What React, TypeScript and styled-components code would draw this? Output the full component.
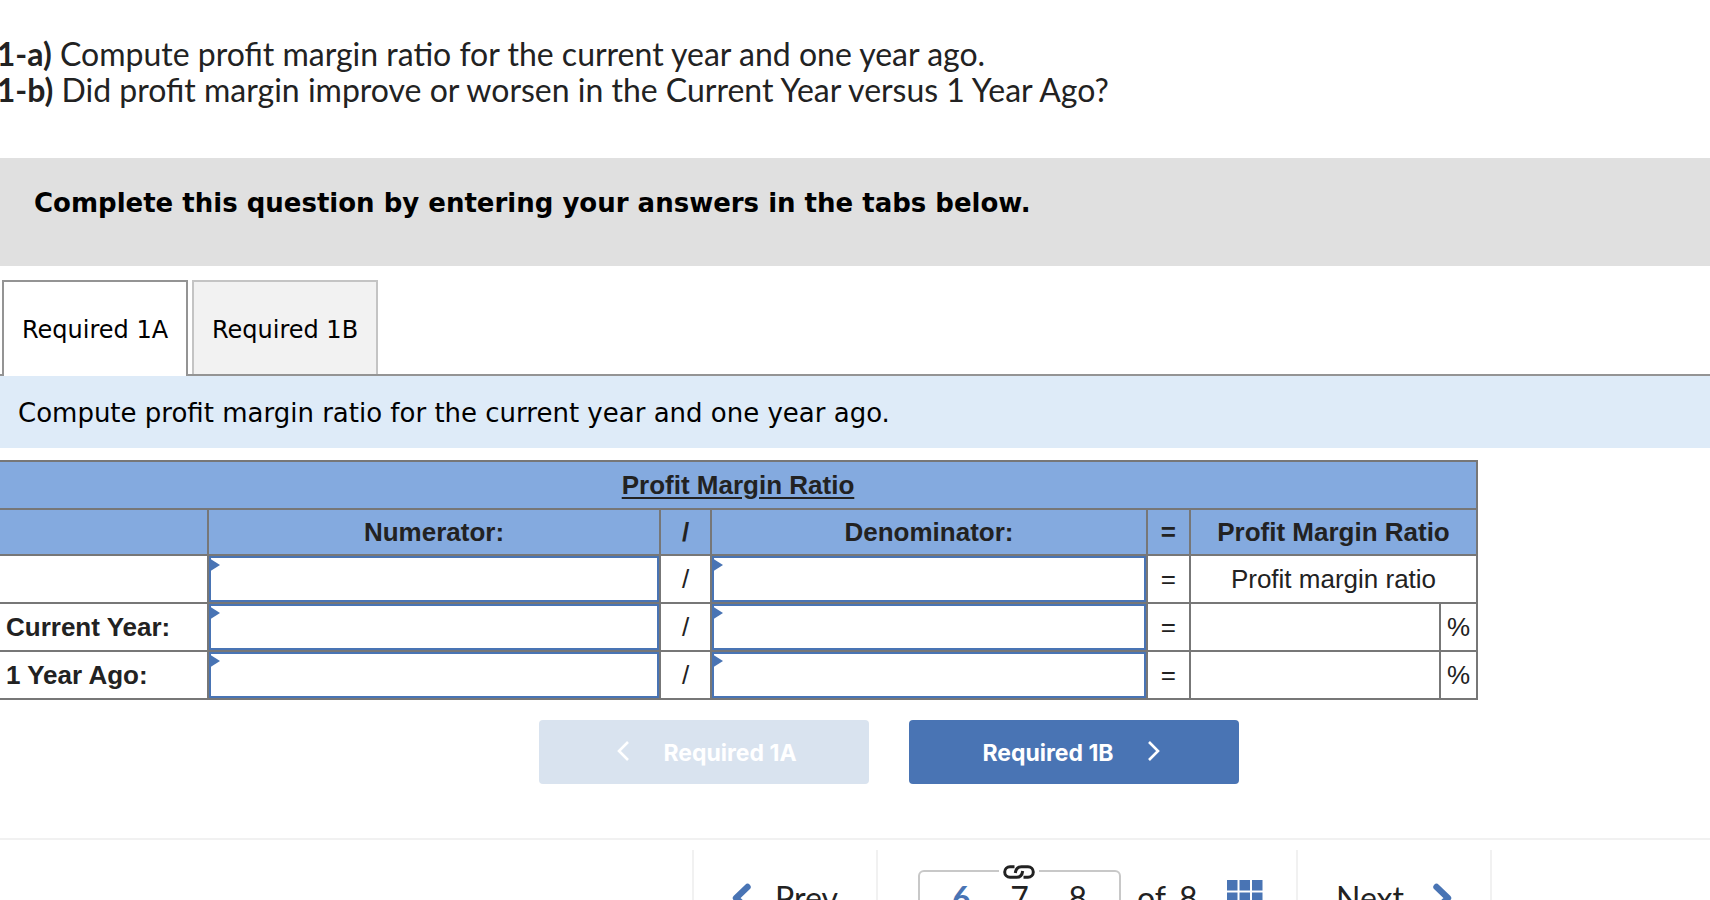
import React, { useState } from "react";
import styled, { createGlobalStyle } from "styled-components";

const GlobalStyle = createGlobalStyle`
  * { box-sizing: border-box; }
  body { margin: 0; background: #fff; }
`;

const uiFont = `Lato, "Liberation Sans", sans-serif`;
const wideFont = `"DejaVu Sans", "Liberation Sans", sans-serif`;
const sheetFont = `"Liberation Sans", sans-serif`;
const line = "#777777";
const blue = "#4974b4";

const Page = styled.main`
  display: flex;
  flex-direction: column;
  height: 100vh;
  overflow: hidden;
  color: #222;
`;

const Intro = styled.section`
  flex: none;
  padding: 36px 0 50px;
  margin-left: -12px;
  font: 32px/36px ${uiFont};
`;

const IntroLine = styled.p`
  margin: 0;
`;

const Banner = styled.section`
  flex: none;
  padding: 27px 34px 45px;
  background: #e0e0e0;
  color: #000;
  font: bold 26px/36px ${wideFont};
`;

const TabBar = styled.div`
  flex: none;
  display: flex;
  gap: 4px;
  margin-top: 14px;
  padding-left: 2px;
  box-shadow: inset 0 -2px 0 #949494;
`;

const Tab = styled.button<{ $active: boolean }>`
  width: 186px;
  height: ${(p) => (p.$active ? 96 : 94)}px;
  padding: ${(p) => (p.$active ? 2 : 4)}px 0 0;
  border: 2px solid ${(p) => (p.$active ? "#949494" : "#c4c4c4")};
  border-bottom: 0;
  background: ${(p) => (p.$active ? "#fff" : "#f2f2f2")};
  color: #000;
  font: 24px/36px ${wideFont};
`;

const Prompt = styled.p`
  flex: none;
  margin: 0;
  padding: 19px 18px 17px;
  background: #deebf8;
  color: #000;
  font: 26px/36px ${wideFont};
`;

const SheetWrap = styled.div`
  flex: none;
  padding: 12px 232px 0 0;
`;

const Sheet = styled.table`
  width: 100%;
  table-layout: fixed;
  border-collapse: separate;
  border-spacing: 0;
  border-top: 2px solid ${line};
  font: 26px/32px ${sheetFont};
`;

const Col = styled.col<{ $width?: number }>`
  width: ${(p) => (p.$width ? `${p.$width}px` : "auto")};
`;

const HeadCell = styled.th<{ $title?: boolean }>`
  height: ${(p) => (p.$title ? 48 : 46)}px;
  padding: 0;
  border: solid ${line};
  border-width: 0 2px 2px 0;
  background: #84aadf;
  text-decoration: ${(p) => (p.$title ? "underline" : "none")};
  text-underline-offset: 3px;
`;

const RowHead = styled.th`
  padding: 0 0 0 6px;
  border: solid ${line};
  border-width: 0 2px 2px 0;
  text-align: left;
`;

const Cell = styled.td`
  position: relative;
  height: 48px;
  padding: 0;
  border: solid ${line};
  border-width: 0 2px 2px 0;
  text-align: center;
`;

const EntryCell = styled(Cell)`
  &::before {
    content: "";
    position: absolute;
    top: 2px;
    left: 0;
    border: solid transparent;
    border-width: 7px 0 7px 11px;
    border-left-color: ${blue};
  }
`;

const Entry = styled.input`
  display: block;
  width: 100%;
  height: 46px;
  padding: 0 14px;
  border: 2px solid ${blue};
  border-radius: 0;
  background: #fff;
  font: inherit;
`;

const StepRow = styled.div`
  flex: none;
  display: flex;
  justify-content: center;
  gap: 40px;
  padding: 20px 0 54px 68px;
`;

const StepButton = styled.button`
  display: flex;
  align-items: center;
  justify-content: center;
  gap: 34px;
  width: 330px;
  height: 64px;
  padding: 2px 0 0;
  border: 0;
  border-radius: 4px;
  background: ${blue};
  color: #fff;
  font: bold 23px/32px Inter, sans-serif;

  svg { margin-bottom: 4px; }

  &:disabled { background: #d9e3ef; }
`;

const Pager = styled.nav`
  flex: none;
  display: flex;
  justify-content: center;
  padding: 10px 0 0 474px;
  border-top: 2px solid #f1f1f1;
  font: 32px/36px ${uiFont};
`;

const PagerPart = styled.div<{ $width: number; $first?: boolean }>`
  display: flex;
  align-items: center;
  width: ${(p) => p.$width}px;
  height: 96px;
  padding: 0 38px;
  border: solid #f1f1f1;
  border-width: 0 2px 0 ${(p) => (p.$first ? 2 : 0)}px;
`;

const PagerButton = styled.button`
  display: flex;
  flex: 1;
  align-items: center;
  justify-content: space-between;
  padding: 0;
  border: 0;
  background: none;
  color: inherit;
  font: inherit;
`;

const Group = styled.div`
  position: relative;
  display: flex;
  flex: none;
  align-items: center;
  justify-content: space-around;
  width: 203px;
  height: 56px;
  margin-left: 2px;
  padding: 0 12px;
  border: 2px solid #c8c8c8;
  border-radius: 6px;
`;

const LinkBadge = styled.span`
  position: absolute;
  top: -7px;
  left: 79px;
  width: 40px;
  height: 14px;
  padding: 0 4px;
  background: #fff;

  svg { display: block; }
`;

const PageLink = styled.a<{ $current?: boolean }>`
  color: ${(p) => (p.$current ? blue : "inherit")};
  font-weight: ${(p) => (p.$current ? "bold" : "normal")};
  text-decoration: none;
`;

const Total = styled.span`
  display: flex;
  flex: none;
  gap: 13px;
  width: 90px;
  margin-left: 16px;
`;

const GridButton = styled.button`
  padding: 0;
  border: 0;
  background: none;

  svg { display: block; }
`;

function Chevron({ left }: { left?: boolean }) {
  return (
    <svg
      width="18"
      height="20"
      viewBox={left ? "-6 0 18 20" : "0 0 18 20"}
      fill="none"
      stroke="currentColor"
      strokeWidth="2.6"
      aria-hidden="true"
    >
      <path d={left ? "M11 1 2 10l9 9" : "M1 1l9 9-9 9"} />
    </svg>
  );
}

function BoldChevron({ left }: { left?: boolean }) {
  return (
    <svg width="20" height="32" viewBox="0 0 20 32" fill="none" stroke={blue} strokeWidth="6.4" strokeLinecap="round" strokeLinejoin="round" aria-hidden="true">
      <path d={left ? "M15.5 5 4 16l11.5 11" : "M4.5 5 16 16 4.5 27"} />
    </svg>
  );
}

function LinkIcon() {
  return (
    <svg width="32" height="14" viewBox="0 0 32 14" fill="none" stroke="#222" strokeWidth="3" aria-hidden="true">
      <path d="M11.500 1.700H7a5.300 5.300 0 0 0 0 10.600h6.500c3.200 0 5.700-2.300 6.200-6.300" />
      <path d="M20.500 12.300H25a5.300 5.300 0 0 0 0-10.600h-6.500c-3.200 0-5.700 2.300-6.200 6.300" />
    </svg>
  );
}

function GridIcon() {
  const at = [0, 12.5, 25];
  return (
    <svg width="36" height="36" viewBox="0 0 36 36" fill={blue} aria-hidden="true">
      {at.map((y) => at.map((x) => <rect key={`${x}-${y}`} x={x} y={y} width="10.5" height="10.5" />))}
    </svg>
  );
}

const rows = [
  { name: "", result: "Profit margin ratio" },
  { name: "Current Year:" },
  { name: "1 Year Ago:" },
];

export default function App() {
  const [tab, setTab] = useState("1A");
  return (
    <Page>
      <GlobalStyle />
      <Intro>
        <IntroLine>
          <b>(1-a)</b> Compute profit margin ratio for the current year and one year ago.
        </IntroLine>
        <IntroLine>
          <b>(1-b)</b> Did profit margin improve or worsen in the Current Year versus 1 Year Ago?
        </IntroLine>
      </Intro>
      <Banner>Complete this question by entering your answers in the tabs below.</Banner>
      <TabBar role="tablist">
        {["1A", "1B"].map((id) => (
          <Tab key={id} role="tab" aria-selected={tab === id} $active={tab === id} onClick={() => setTab(id)}>
            Required {id}
          </Tab>
        ))}
      </TabBar>
      <Prompt>Compute profit margin ratio for the current year and one year ago.</Prompt>
      <SheetWrap>
        <Sheet>
          <colgroup>
            <Col $width={209} />
            <Col $width={452} />
            <Col $width={51} />
            <Col />
            <Col $width={43} />
            <Col $width={250} />
            <Col $width={37} />
          </colgroup>
          <thead>
            <tr>
              <HeadCell $title colSpan={7}>Profit Margin Ratio</HeadCell>
            </tr>
            <tr>
              <HeadCell />
              <HeadCell>Numerator:</HeadCell>
              <HeadCell>/</HeadCell>
              <HeadCell>Denominator:</HeadCell>
              <HeadCell>=</HeadCell>
              <HeadCell colSpan={2}>Profit Margin Ratio</HeadCell>
            </tr>
          </thead>
          <tbody>
            {rows.map((row) => (
              <tr key={row.name}>
                <RowHead scope="row">{row.name}</RowHead>
                <EntryCell>
                  <Entry aria-label={`${row.name} Numerator`} />
                </EntryCell>
                <Cell>/</Cell>
                <EntryCell>
                  <Entry aria-label={`${row.name} Denominator`} />
                </EntryCell>
                <Cell>=</Cell>
                {row.result ? (
                  <Cell colSpan={2}>{row.result}</Cell>
                ) : (
                  <>
                    <Cell />
                    <Cell>%</Cell>
                  </>
                )}
              </tr>
            ))}
          </tbody>
        </Sheet>
      </SheetWrap>
      <StepRow>
        <StepButton disabled={tab === "1A"} onClick={() => setTab("1A")}>
          <Chevron left />
          Required 1A
        </StepButton>
        <StepButton disabled={tab === "1B"} onClick={() => setTab("1B")}>
          Required 1B
          <Chevron />
        </StepButton>
      </StepRow>
      <Pager>
        <PagerPart $width={186} $first>
          <PagerButton>
            <BoldChevron left />
            Prev
          </PagerButton>
        </PagerPart>
        <PagerPart $width={420}>
          <Group>
            <LinkBadge>
              <LinkIcon />
            </LinkBadge>
            <PageLink href="#6" $current>6</PageLink>
            <PageLink href="#7">7</PageLink>
            <PageLink href="#8">8</PageLink>
          </Group>
          <Total>
            <span>of</span>
            <span>8</span>
          </Total>
          <GridButton aria-label="All questions">
            <GridIcon />
          </GridButton>
        </PagerPart>
        <PagerPart $width={194}>
          <PagerButton>
            Next
            <BoldChevron />
          </PagerButton>
        </PagerPart>
      </Pager>
    </Page>
  );
}
